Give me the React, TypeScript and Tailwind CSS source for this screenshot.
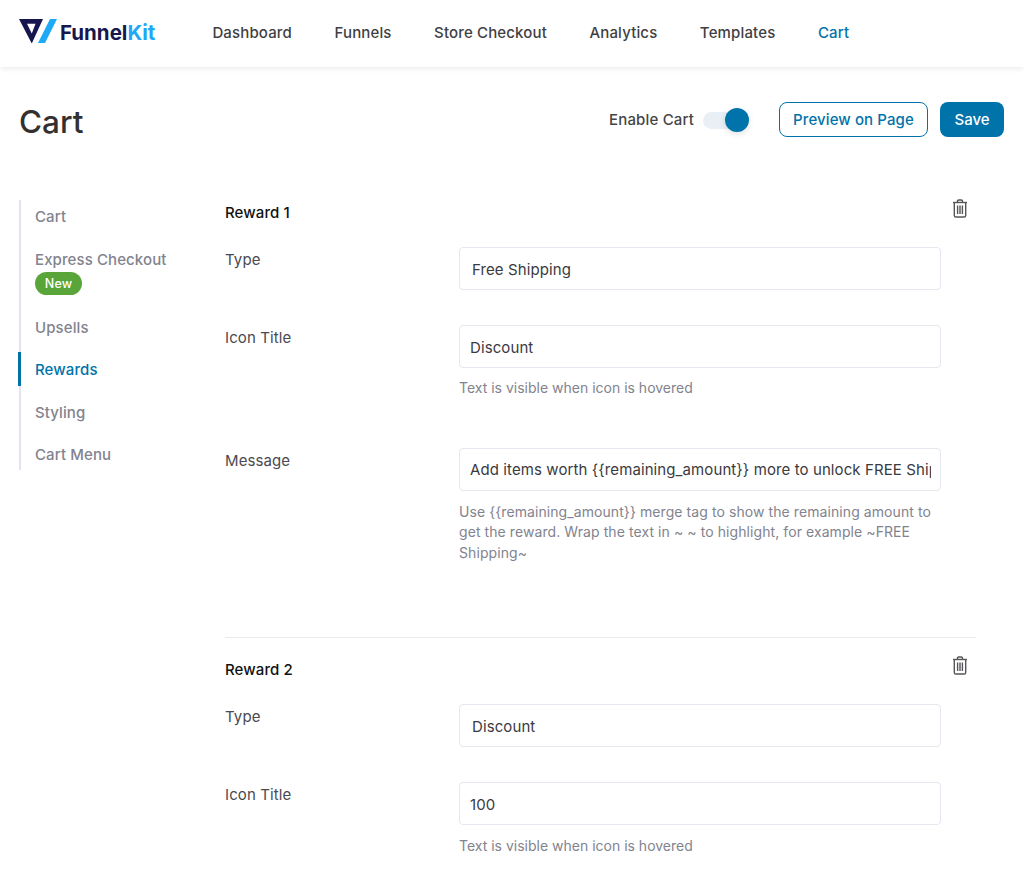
import React from "react";

const navItems = ["Dashboard", "Funnels", "Store Checkout", "Analytics", "Templates", "Cart"];

function Logo() {
  return (
    <div className="flex items-center">
      <svg width="38" height="25" viewBox="0 0 38 25" className="-mt-[5px] block">
        <path d="M0 0H24L13 24H12.5L0 0Z M8 4.8L12.8 14.5L16.5 4.8Z" fill="#17174f" fillRule="evenodd" />
        <path d="M31 0H38L26 24H19L31 0Z" fill="#1DA9F5" />
      </svg>
      <span className="ml-[3px] text-[20.5px] leading-none font-bold text-[#17174f]">
        Funnel<span className="text-[#1DA9F5]">Kit</span>
      </span>
    </div>
  );
}

function TrashIcon() {
  return (
    <svg width="16" height="19" viewBox="0 0 16 19" fill="none" stroke="#55555a" strokeWidth="1.4" className="block">
      <path d="M1 3.5H15" />
      <path d="M5.5 3.3V2.2C5.5 1.5 6 1 6.7 1H9.3C10 1 10.5 1.5 10.5 2.2V3.3" />
      <path d="M2.3 3.5V16.4C2.3 17.3 3 18 3.9 18H12.1C13 18 13.7 17.3 13.7 16.4V3.5" />
      <path d="M5.6 6.5V15M8 6.5V15M10.4 6.5V15" />
    </svg>
  );
}

function Field({ label, value, select, help, className = "", helpClass = "mt-[10px]" }: { label: string; value: string; select?: boolean; help?: string; className?: string; helpClass?: string }) {
  return (
    <div className={`flex ${className}`}>
      <div className="w-[234px] shrink-0 pt-[3px] text-[15px] leading-[20px] tracking-[0.1px] text-[#4a4a4f]">{label}</div>
      <div className="w-[482px]">
        <div
          className={`flex h-[43px] items-center overflow-hidden whitespace-nowrap rounded-[4px] border border-[#e6e8f0] bg-white pt-[3px] text-[15px] tracking-[0.1px] text-[#3a3a3f] ${select ? "pl-3" : "pl-[10px]"} pr-[9px]`}
        >
          <span className="block w-full overflow-hidden">{value}</span>
        </div>
        {help && <div className={`max-w-[476px] text-[14px] leading-[20.5px] text-[#82838e] ${helpClass}`}>{help}</div>}
      </div>
    </div>
  );
}

function RewardHead({ title }: { title: string }) {
  return (
    <div className="flex items-start justify-between">
      <div className="pt-[1px] text-[15px] font-medium leading-[20px] tracking-[0.1px] text-[#111]">{title}</div>
      <div className="mr-[8px] -mt-[3px]"><TrashIcon /></div>
    </div>
  );
}

const sideItems = ["Cart", "Express Checkout", "Upsells", "Rewards", "Styling", "Cart Menu"];
const messageHelp = "Use {{remaining_amount}} merge tag to show the remaining amount to get the reward. Wrap the text in ~ ~ to highlight, for example ~FREE Shipping~";

export default function App() {
  return (
    <div className="h-[878px] overflow-hidden bg-white font-['Inter',sans-serif]">
      <header className="flex h-[67px] items-center bg-white pl-[19px] shadow-[0_1px_6px_rgba(0,0,0,0.1)]">
        <Logo />
        <nav className="-mt-[1px] ml-[57px] flex gap-[42.5px]">
          {navItems.map((n) => (
            <a key={n} className={`text-[15px] font-medium tracking-[0.15px] ${n === "Cart" ? "text-[#0073aa]" : "text-[#3f3f44]"}`}>
              {n}
            </a>
          ))}
        </nav>
      </header>

      <div className="mt-[19px] flex h-[70px] items-center justify-between pl-[19px] pr-[20px]">
        <h1 className="mt-[2px] text-[31.5px] font-medium leading-none text-[#353030]">Cart</h1>
        <div className="-mt-[4px] flex items-center">
          <span className="mt-[3px] text-[15px] font-medium tracking-[0.17px] text-[#454548]">Enable Cart</span>
          <div className="relative ml-[9px] mt-[3px] h-[17px] w-[45px] rounded-full bg-[#e9f0f5]">
            <div className="absolute -right-[1px] -top-[4px] h-[24px] w-[24px] rounded-full bg-[#0073aa] shadow-[0_2px_6px_rgba(0,0,0,0.12)]" />
          </div>
          <button className="ml-[31px] h-[35px] w-[149px] rounded-[8px] border border-[#0073aa] bg-white pt-[3px] text-[15px] font-medium tracking-[0.1px] text-[#0073aa]">
            Preview on Page
          </button>
          <button className="ml-[12px] h-[35px] w-[64px] rounded-[8px] bg-[#0073aa] pt-[3px] text-[15px] font-medium text-white">Save</button>
        </div>
      </div>

      <div className="mt-[44px] flex pl-[19px]">
        <aside className="h-[270px] w-[206px] shrink-0">
          <div className="h-[270px] w-[160px] border-l-2 border-[#e3e3ef]">
            {sideItems.map((s) => (
              <div
                key={s}
                className={`relative pl-[14px] text-[15px] font-medium leading-[20px] tracking-[0.1px] ${s === "Rewards" ? "text-[#0073aa]" : "text-[#82838e]"} ${s === "Express Checkout" ? "h-[68.6px] pt-[8px]" : "h-[42.4px] pt-[7px]"}`}
              >
                {s === "Rewards" && <span className="absolute -left-[3px] -top-[1px] h-[34px] w-[3px] bg-[#0073aa]" />}
                {s}
                {s === "Express Checkout" && (
                  <div className="mt-[2px] flex h-[23px] w-[47px] items-center justify-center rounded-full bg-[#5aa53a] text-[12.5px] font-medium text-white">
                    New
                  </div>
                )}
              </div>
            ))}
          </div>
        </aside>

        <main className="w-[751px]">
          <div className="pt-[2px]">
            <RewardHead title="Reward 1" />
            <Field className="mt-[24px]" label="Type" value="Free Shipping" select />
            <Field className="mt-[35px]" label="Icon Title" value="Discount" help="Text is visible when icon is hovered" />
            <Field className="mt-[49px]" label="Message" value="Add items worth {{remaining_amount}} more to unlock FREE Shipping~" help={messageHelp} helpClass="mt-[11px] tracking-[0.08px]" />
          </div>
          <div className="mt-[74px] border-t border-[#e9e9ee] pt-[21px]">
            <RewardHead title="Reward 2" />
            <Field className="mt-[24px]" label="Type" value="Discount" select />
            <Field className="mt-[35px]" label="Icon Title" value="100" help="Text is visible when icon is hovered" helpClass="mt-[11px]" />
          </div>
        </main>
      </div>
    </div>
  );
}
